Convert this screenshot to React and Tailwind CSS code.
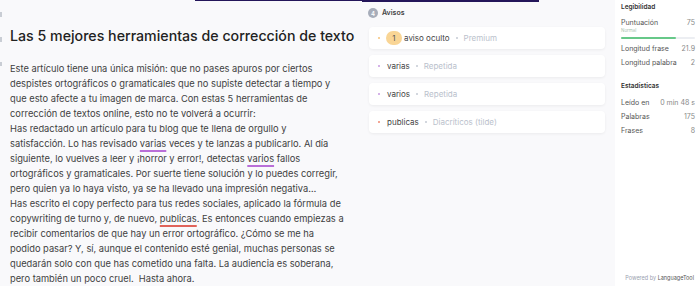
import React from 'react';

const issues = [
  { dot: 'bg-[#f5c27a]', word: 'aviso oculto', tag: 'Premium', badge: '1' },
  { dot: 'bg-[#c79ae0]', word: 'varias', tag: 'Repetida' },
  { dot: 'bg-[#c79ae0]', word: 'varios', tag: 'Repetida' },
  { dot: 'bg-[#ef8a73]', word: 'publicas', tag: 'Diacríticos (tilde)' },
];

const Mark = ({ color, children }) => (
  <span className={`underline decoration-[1.5px] underline-offset-[3px] ${color}`}>{children}</span>
);

function Stat({ label, value }) {
  return (
    <div className="flex justify-between text-[7px] text-[#555] leading-none">
      <span>{label}</span>
      <span className="text-[#888]">{value}</span>
    </div>
  );
}

export default function App() {
  return (
    <div className="w-[700px] h-[286px] flex bg-[#f9f9fb] overflow-hidden text-[#3a3a3a]" style={{ fontFamily: 'Inter, "Noto Sans", sans-serif' }}>
      {/* editor */}
      <div className="w-[362px] shrink-0 flex flex-col relative">
        <div className="h-[2px] ml-[195px] w-[167px] bg-[#24165a]" />
        <div className="absolute left-0 top-[12px] flex flex-col gap-[20px]">
          <span className="w-[2px] h-[5px] bg-[#c9cdd4]" />
          <span className="w-[2px] h-[5px] bg-[#c9cdd4]" />
          <span className="w-[2px] h-[4px] bg-[#c9cdd4]" />
        </div>
        <h1 className="pl-[10px] pt-[25px] text-[14.2px] font-medium text-[#222] leading-[20px] whitespace-nowrap">
          Las 5 mejores herramientas de corrección de texto
        </h1>
        <div className="pl-[10px] pt-[15px] text-[9.3px] leading-[15px] text-[#3f3f3f] whitespace-nowrap">
          <p>
            Este artículo tiene una única misión: que no pases apuros por ciertos<br />
            despistes ortográficos o gramaticales que no supiste detectar a tiempo y<br />
            que esto afecte a tu imagen de marca. Con estas 5 herramientas de<br />
            corrección de textos online, esto no te volverá a ocurrir:
          </p>
          <p>
            Has redactado un artículo para tu blog que te llena de orgullo y<br />
            satisfacción. Lo has revisado <Mark color="decoration-[#b96fd8]">varias</Mark> veces y te lanzas a publicarlo. Al día<br />
            siguiente, lo vuelves a leer y ¡horror y error!, detectas <Mark color="decoration-[#b96fd8]">varios</Mark> fallos<br />
            ortográficos y gramaticales. Por suerte tiene solución y lo puedes corregir,<br />
            pero quien ya lo haya visto, ya se ha llevado una impresión negativa…
          </p>
          <p>
            Has escrito el copy perfecto para tus redes sociales, aplicado la fórmula de<br />
            copywriting de turno y, de nuevo, <Mark color="decoration-[#e0635a]">publicas</Mark>. Es entonces cuando empiezas a<br />
            recibir comentarios de que hay un error ortográfico. ¿Cómo se me ha<br />
            podido pasar? Y, sí, aunque el contenido esté genial, muchas personas se<br />
            quedarán solo con que has cometido una falta. La audiencia es soberana,<br />
            pero también un poco cruel.&nbsp; Hasta ahora.
          </p>
        </div>
      </div>

      {/* issues */}
      <div className="w-[253px] shrink-0 flex flex-col">
        <div className="h-[2px] w-[177px] bg-[#24165a]" />
        <div className="flex items-center gap-[4px] pl-[6px] pt-[6px] h-[16px]">
          <span className="w-[10px] h-[10px] rounded-full bg-[#a7adba] text-white text-[6px] font-semibold flex items-center justify-center">4</span>
          <span className="text-[7px] font-semibold text-[#444]">Avisos</span>
        </div>
        <div className="flex flex-col gap-[6px] pl-[7px] pr-[10px] pt-[9px]">
          {issues.map((it) => (
            <div key={it.word} className="h-[22px] bg-white rounded-[4px] shadow-[0_1px_3px_rgba(0,0,0,0.06)] flex items-center pl-[9px] text-[8px]">
              <span className={`w-[2px] h-[2px] rounded-full ${it.dot}`} />
              {it.badge && (
                <span className="ml-[6px] w-[16px] h-[14px] rounded-full bg-[#f9d595] text-[#555] text-[8px] flex items-center justify-center">{it.badge}</span>
              )}
              <span className={`${it.badge ? 'ml-[2px]' : 'ml-[7px]'} text-[#444]`}>{it.word}</span>
              <span className="mx-[6px] w-[2px] h-[2px] rounded-full bg-[#c5cad3]" />
              <span className="text-[#bac1cc]">{it.tag}</span>
            </div>
          ))}
        </div>
      </div>

      {/* sidebar */}
      <div className="flex-1 bg-white flex flex-col pl-[6px] pr-[5px] pt-[4px]">
        <div className="text-[6.5px] font-semibold text-[#333] leading-none">Legibilidad</div>
        <div className="mt-[8px]"><Stat label="Puntuación" value="75" /></div>
        <div className="mt-[3px] text-[4.5px] text-[#a9c2b1] leading-none">Normal</div>
        <div className="mt-[4px] h-[2px] bg-[#eceef2] rounded-full">
          <div className="h-full w-[74%] bg-[#67c889] rounded-full" />
        </div>
        <div className="mt-[6px]"><Stat label="Longitud frase" value="21.9" /></div>
        <div className="mt-[7px]"><Stat label="Longitud palabra" value="2" /></div>
        <div className="mt-[17px] text-[6.5px] font-semibold text-[#333] leading-none">Estadísticas</div>
        <div className="mt-[9px]"><Stat label="Leído en" value="0 min 48 s" /></div>
        <div className="mt-[7px]"><Stat label="Palabras" value="175" /></div>
        <div className="mt-[7px]"><Stat label="Frases" value="8" /></div>
        <div className="mt-auto mb-[4px] text-[5.5px] text-[#9aa1b0] text-right pr-[1px]">
          Powered by <span className="text-[#555]">LanguageTool</span>
        </div>
      </div>
    </div>
  );
}
